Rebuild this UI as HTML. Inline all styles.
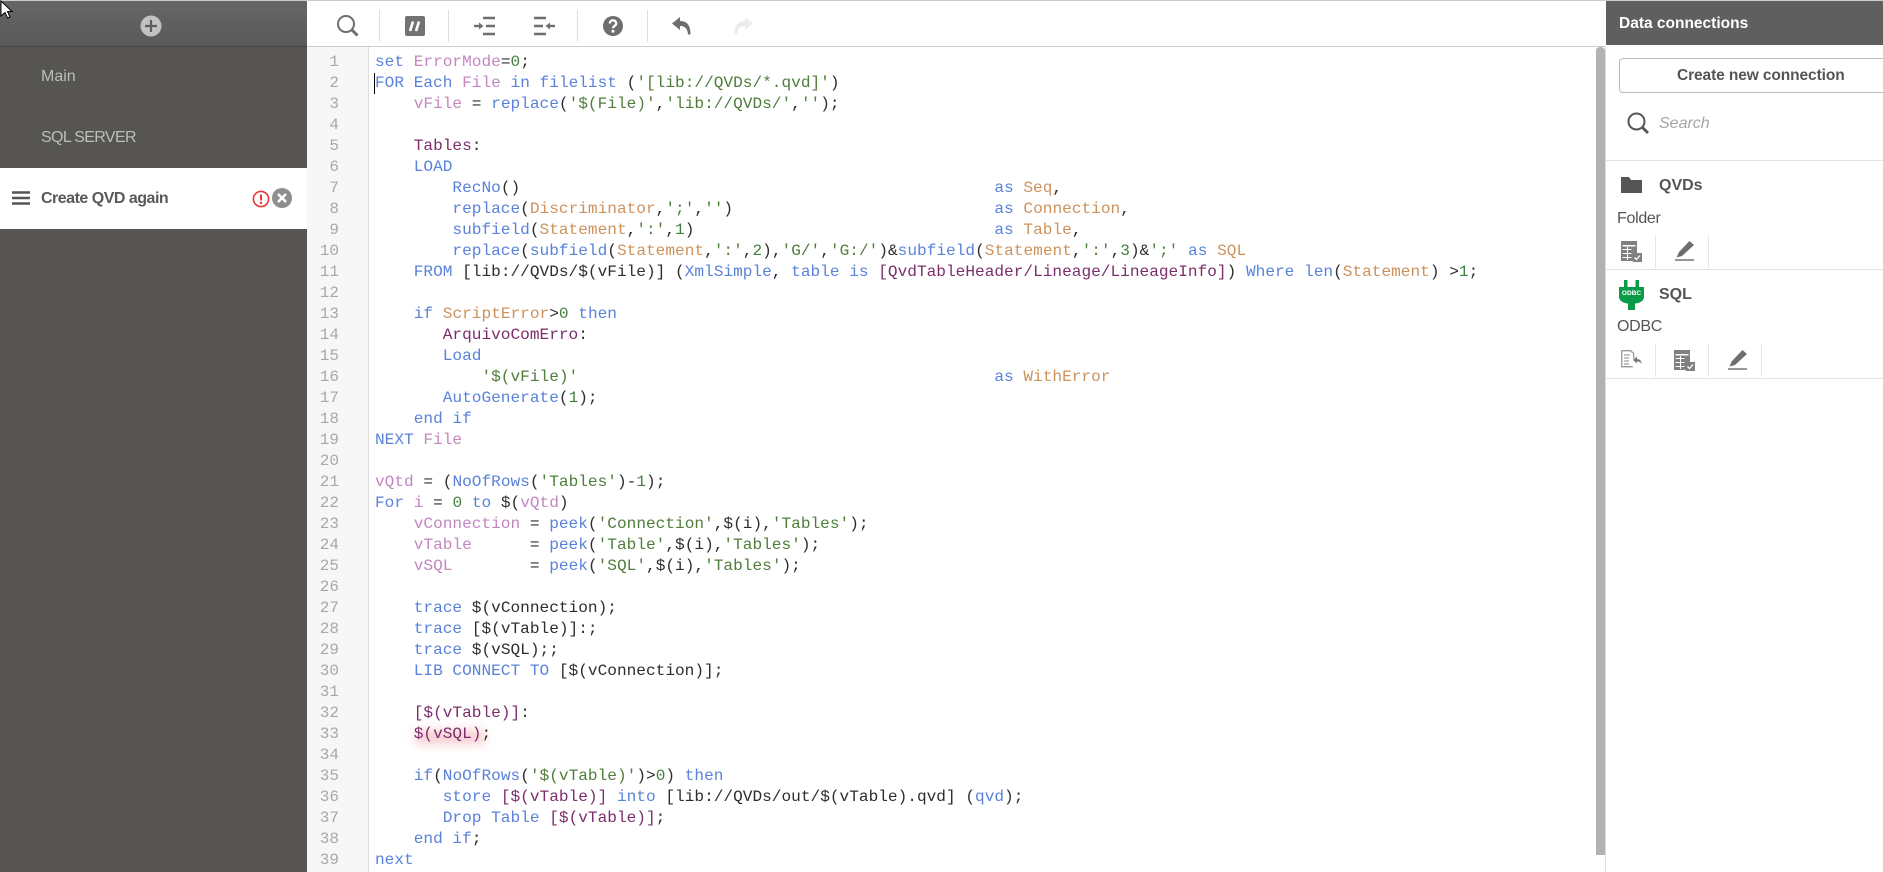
<!DOCTYPE html>
<html><head><meta charset="utf-8"><title>Data load editor</title>
<style>
html,body{margin:0;padding:0;width:1883px;height:872px;overflow:hidden;background:#fff;font-family:"Liberation Sans",sans-serif}
.a{position:absolute}
#left{left:0;top:0;width:307px;height:872px;background:#575551}
#lh{left:0;top:1px;width:307px;height:45px;background:linear-gradient(#666,#5a5a5a);border-bottom:1px solid #474747}
.tab{left:41px;font-size:16px;color:#bdbdbd;line-height:20px}
#tb{left:307px;top:1px;width:1299px;height:45px;background:#fff;border-bottom:1px solid #ccc}
.sep{top:10px;width:1px;height:32px;background:#ddd}
#gut{left:307px;top:47px;width:61px;height:825px;background:#f7f7f7;border-right:1px solid #ddd}
#nums{left:307px;top:52px;width:32px;text-align:right;font:16px/21px "Liberation Mono",monospace;color:#a8a8a8;margin:0}
#code{left:375px;top:52px;margin:0;font:16.14px/21px "Liberation Mono",monospace;color:#2e2e2e;white-space:pre}
.k{color:#5a82da}.v{color:#c287c0}.f{color:#cd925c}.t{color:#7c2d6c}.s{color:#4f7d3a}.n{color:#3f7f3f}
#right{left:1606px;top:0;width:277px;height:872px;background:#fff}
.hr{left:1606px;width:277px;height:1px;background:#e3e3e3}
.isep{width:1px;background:#e6e6e6;height:33px}
.b{font-weight:bold;color:#555;font-size:16px;line-height:20px}
.r{color:#555;font-size:16px;line-height:20px;letter-spacing:-.3px}
</style></head><body>
<div class="a" style="left:0;top:0;width:1883px;height:1px;background:#ccc;z-index:5"></div>
<div id="left" class="a"></div>
<div id="lh" class="a"></div>
<svg class="a" style="left:140px;top:15px" width="22" height="22" viewBox="0 0 22 22"><circle cx="11" cy="11" r="10.5" fill="#c2c2c2"/><path d="M11 5v12M5 11h12" stroke="#5c5c5c" stroke-width="2.2"/></svg>
<div class="a tab" style="top:67px">Main</div>
<div class="a tab" style="top:128px;letter-spacing:-.65px">SQL SERVER</div>
<div class="a" style="left:0;top:168px;width:307px;height:61px;background:#fff"></div>
<svg class="a" style="left:12px;top:191px" width="18" height="14"><path d="M0 1.5h18M0 7h18M0 12.500h18" stroke="#555" stroke-width="2.4"/></svg>
<div class="a" style="left:41px;top:189px;font-size:16px;font-weight:bold;color:#595959;line-height:20px;letter-spacing:-.5px">Create QVD again</div>
<svg class="a" style="left:252px;top:190px" width="18" height="18" viewBox="0 0 18 18"><circle cx="9" cy="9" r="7.6" fill="#fff" stroke="#e8383b" stroke-width="1.6"/><path d="M9 4.5v6" stroke="#e8383b" stroke-width="2"/><circle cx="9" cy="13" r="1.2" fill="#e8383b"/></svg>
<svg class="a" style="left:272px;top:188px" width="20" height="20" viewBox="0 0 20 20"><circle cx="10" cy="10" r="10" fill="#8e8e8e"/><path d="M6 6l8 8M14 6l-8 8" stroke="#fff" stroke-width="2.6"/></svg>

<div id="tb" class="a"></div>
<div class="a sep" style="left:379px"></div><div class="a sep" style="left:448px"></div><div class="a sep" style="left:577px"></div><div class="a sep" style="left:647px"></div>
<svg class="a" style="left:336px;top:14px" width="24" height="24" viewBox="0 0 24 24"><circle cx="10" cy="10" r="8" fill="none" stroke="#6e6e6e" stroke-width="2"/><path d="M15.500 15.500l6 6" stroke="#6e6e6e" stroke-width="3"/></svg>
<svg class="a" style="left:405px;top:16px" width="20" height="20" viewBox="0 0 20 20"><rect width="20" height="20" rx="2" fill="#737373"/><path d="M8 5.500l-3 9.500M14 5.500l-3 9.500" stroke="#fff" stroke-width="2.6"/></svg>
<svg class="a" style="left:474px;top:16px" width="21" height="20" viewBox="0 0 21 20"><path d="M9 2h12M12 10h9M9 18h12" stroke="#6e6e6e" stroke-width="2.4"/><path d="M0 10h6" stroke="#6e6e6e" stroke-width="2.4"/><path d="M5 6.500l4.500 3.500-4.500 3.500z" fill="#6e6e6e"/></svg>
<svg class="a" style="left:534px;top:16px" width="21" height="20" viewBox="0 0 21 20"><path d="M0 2h12M0 10h9M0 18h12" stroke="#6e6e6e" stroke-width="2.4"/><path d="M15 10h6" stroke="#6e6e6e" stroke-width="2.4"/><path d="M16 6.500l-4.500 3.500 4.500 3.500z" fill="#6e6e6e"/></svg>
<svg class="a" style="left:603px;top:16px" width="20" height="20" viewBox="0 0 20 20"><circle cx="10" cy="10" r="10" fill="#6e6e6e"/><path d="M6.800 7.500c0-4.200 6.400-4.200 6.400 0 0 2.400-3.200 2.400-3.200 4.800" fill="none" stroke="#fff" stroke-width="2.400"/><circle cx="10" cy="15.300" r="1.500" fill="#fff"/></svg>
<svg class="a" style="left:672px;top:16px" width="19" height="19" viewBox="0 0 19 19"><path d="M8 1L0 7.500 8 14v-4c5 0 7.500 2.500 8 8.500h2.500C18.500 9 15 5 8 5z" fill="#6e6e6e"/></svg>
<svg class="a" style="left:734px;top:16px" width="19" height="19" viewBox="0 0 19 19"><path d="M11 1l8 6.500L11 14v-4c-5 0-7.500 2.500-8 8.500H.500C.500 9 4 5 11 5z" fill="#ececec"/></svg>

<div id="gut" class="a"></div>
<pre id="nums" class="a">1
2
3
4
5
6
7
8
9
10
11
12
13
14
15
16
17
18
19
20
21
22
23
24
25
26
27
28
29
30
31
32
33
34
35
36
37
38
39</pre>
<div class="a" style="left:414px;top:730px;width:72px;height:14px;background:rgba(232,90,100,.3);border-radius:10px;filter:blur(5px)"></div>
<div class="a" style="left:374px;top:73px;width:1px;height:21px;background:#000;z-index:3"></div>
<pre id="code" class="a"><span class="k">set</span> <span class="v">ErrorMode</span>=<span class="n">0</span>;
<span class="k">FOR Each</span> <span class="v">File</span> <span class="k">in filelist</span> (<span class="s">'[lib://QVDs/*.qvd]'</span>)
    <span class="v">vFile</span> = <span class="k">replace</span>(<span class="s">'$(File)'</span>,<span class="s">'lib://QVDs/'</span>,<span class="s">''</span>);

    <span class="t">Tables</span>:
    <span class="k">LOAD</span>
        <span class="k">RecNo</span>()                                                 <span class="k">as</span> <span class="f">Seq</span>,
        <span class="k">replace</span>(<span class="f">Discriminator</span>,<span class="s">';'</span>,<span class="s">''</span>)                           <span class="k">as</span> <span class="f">Connection</span>,
        <span class="k">subfield</span>(<span class="f">Statement</span>,<span class="s">':'</span>,<span class="n">1</span>)                               <span class="k">as</span> <span class="f">Table</span>,
        <span class="k">replace</span>(<span class="k">subfield</span>(<span class="f">Statement</span>,<span class="s">':'</span>,<span class="n">2</span>),<span class="s">'G/'</span>,<span class="s">'G:/'</span>)&amp;<span class="k">subfield</span>(<span class="f">Statement</span>,<span class="s">':'</span>,<span class="n">3</span>)&amp;<span class="s">';'</span> <span class="k">as</span> <span class="f">SQL</span>
    <span class="k">FROM</span> [lib://QVDs/$(vFile)] (<span class="k">XmlSimple</span>, <span class="k">table is</span> <span class="t">[QvdTableHeader/Lineage/LineageInfo]</span>) <span class="k">Where len</span>(<span class="f">Statement</span>) &gt;<span class="n">1</span>;

    <span class="k">if</span> <span class="f">ScriptError</span>&gt;<span class="n">0</span> <span class="k">then</span>
       <span class="t">ArquivoComErro</span>:
       <span class="k">Load</span>
           <span class="s">'$(vFile)'</span>                                           <span class="k">as</span> <span class="f">WithError</span>
       <span class="k">AutoGenerate</span>(<span class="n">1</span>);
    <span class="k">end if</span>
<span class="k">NEXT</span> <span class="v">File</span>

<span class="v">vQtd</span> = (<span class="k">NoOfRows</span>(<span class="s">'Tables'</span>)-<span class="n">1</span>);
<span class="k">For</span> <span class="v">i</span> = <span class="n">0</span> <span class="k">to</span> $(<span class="v">vQtd</span>)
    <span class="v">vConnection</span> = <span class="k">peek</span>(<span class="s">'Connection'</span>,$(i),<span class="s">'Tables'</span>);
    <span class="v">vTable</span>      = <span class="k">peek</span>(<span class="s">'Table'</span>,$(i),<span class="s">'Tables'</span>);
    <span class="v">vSQL</span>        = <span class="k">peek</span>(<span class="s">'SQL'</span>,$(i),<span class="s">'Tables'</span>);

    <span class="k">trace</span> $(vConnection);
    <span class="k">trace</span> [$(vTable)]:;
    <span class="k">trace</span> $(vSQL);;
    <span class="k">LIB CONNECT TO</span> [$(vConnection)];

    <span class="t">[$(vTable)]</span>:
    <span class="t">$(vSQL)</span>;

    <span class="k">if</span>(<span class="k">NoOfRows</span>(<span class="s">'$(vTable)'</span>)&gt;<span class="n">0</span>) <span class="k">then</span>
       <span class="k">store</span> <span class="t">[$(vTable)]</span> <span class="k">into</span> [lib://QVDs/out/$(vTable).qvd] (<span class="k">qvd</span>);
       <span class="k">Drop Table</span> <span class="t">[$(vTable)]</span>;
    <span class="k">end if</span>;
<span class="k">next</span></pre>

<div class="a" style="left:1596px;top:47px;width:9px;height:808px;background:#b2b2b2;border-radius:4px 4px 0 0"></div>
<div class="a" style="left:1605px;top:46px;width:1px;height:826px;background:#ddd"></div>

<div id="right" class="a"></div>
<div class="a" style="left:1606px;top:1px;width:277px;height:44px;background:#5f5f5f"></div>
<div class="a" style="left:1619px;top:14px;color:#fff;font-size:15.5px;font-weight:bold;line-height:20px">Data connections</div>
<div class="a" style="left:1619px;top:58px;width:280px;height:33px;border:1px solid #bbb;border-radius:4px"></div>
<div class="a b" style="left:1677px;top:66px;font-size:15.5px;letter-spacing:-.1px">Create new connection</div>
<svg class="a" style="left:1627px;top:112px" width="23" height="23" viewBox="0 0 23 23"><circle cx="9.500" cy="9.500" r="8" fill="none" stroke="#555" stroke-width="2"/><path d="M15 15l6 6" stroke="#555" stroke-width="2.800"/></svg>
<div class="a" style="left:1659px;top:114px;font-size:16px;font-style:italic;color:#a5a5a5;line-height:20px">Search</div>
<div class="a hr" style="top:160px"></div>
<svg class="a" style="left:1621px;top:177px" width="21" height="16" viewBox="0 0 21 16"><path d="M0 0h8l2 3h11v13H0z" fill="#555"/></svg>
<div class="a b" style="left:1659px;top:176px">QVDs</div>
<div class="a r" style="left:1617px;top:209px">Folder</div>
<svg class="a" style="left:1621px;top:241px" width="21" height="21" viewBox="0 0 21 21"><path d="M0 0h16v14h-3v6H0z" fill="#808080"/><path d="M1.500 4h13v1.500h-13zM1.500 8h9v1h-9zM1.500 12h9v1h-9zM1.500 16h9v1h-9zM6 6h1v13H6z" fill="#fff"/><rect x="12" y="12" width="9" height="9" fill="#808080"/><path d="M13.500 16.500l2 2 3.500-4" stroke="#fff" stroke-width="1.300" fill="none"/></svg>
<div class="a isep" style="left:1655px;top:235px"></div><div class="a isep" style="left:1708px;top:235px"></div>
<svg class="a" style="left:1675px;top:241px" width="20" height="20" viewBox="0 0 20 20"><path d="M14.500 0l4.500 4L7 15l-5.500 1.500L4 11z" fill="#6e6e6e"/><path d="M0 19h19" stroke="#777" stroke-width="1.600"/></svg>
<div class="a hr" style="top:269px"></div>
<svg class="a" style="left:1619px;top:280px" width="25" height="30" viewBox="0 0 25 30"><path d="M5 0h3.500v7h8V0H20v7h5v10c0 3-3 6-9 6.500V30h-7v-6.500C3 23 0 20 0 17V7h5z" fill="#0a9b4a"/><text x="12.500" y="15" font-family="Liberation Sans,sans-serif" font-size="6.500" font-weight="bold" fill="#fff" text-anchor="middle">ODBC</text></svg>
<div class="a b" style="left:1659px;top:285px">SQL</div>
<div class="a r" style="left:1617px;top:317px">ODBC</div>
<svg class="a" style="left:1621px;top:350px" width="21" height="18" viewBox="0 0 21 18"><path d="M.700.700h9l3 3v5M.700.700v16h11" fill="none" stroke="#999" stroke-width="1.300"/><path d="M3 5h6M3 8h5M3 11h5M3 14h5" stroke="#888"/><path d="M12 10l4-3.500v2.500c3 0 4.500 2 4.500 5-1-2-2.500-2.500-4.500-2.500v2z" fill="#777"/></svg>
<div class="a isep" style="left:1655px;top:344px"></div><div class="a isep" style="left:1708px;top:344px"></div><div class="a isep" style="left:1761px;top:344px"></div>
<svg class="a" style="left:1674px;top:350px" width="21" height="21" viewBox="0 0 21 21"><path d="M0 0h16v14h-3v6H0z" fill="#808080"/><path d="M1.500 4h13v1.500h-13zM1.500 8h9v1h-9zM1.500 12h9v1h-9zM1.500 16h9v1h-9zM6 6h1v13H6z" fill="#fff"/><rect x="12" y="12" width="9" height="9" fill="#808080"/><path d="M13.500 16.500l2 2 3.500-4" stroke="#fff" stroke-width="1.300" fill="none"/></svg>
<svg class="a" style="left:1728px;top:350px" width="20" height="20" viewBox="0 0 20 20"><path d="M14.500 0l4.500 4L7 15l-5.500 1.500L4 11z" fill="#6e6e6e"/><path d="M0 19h19" stroke="#777" stroke-width="1.600"/></svg>
<div class="a hr" style="top:378px"></div>

<svg class="a" style="left:0;top:0;z-index:9" width="14" height="20" viewBox="0 0 14 20"><path d="M1 1v15l4-3.500 2.500 5.500 2.500-1-2.500-5.500H12z" fill="#fff" stroke="#000" stroke-width="1"/></svg>
</body></html>
